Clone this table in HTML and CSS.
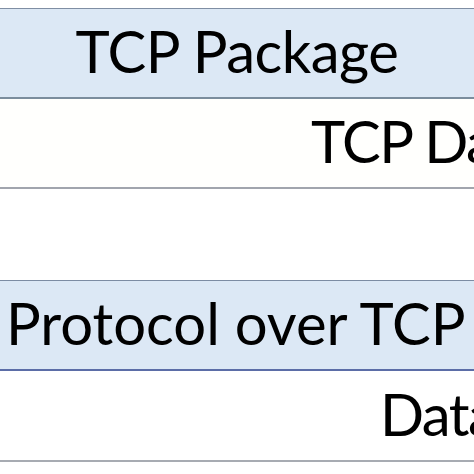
FILE: index.html
```html
<!DOCTYPE html>
<html lang="en">
<head>
<meta charset="utf-8">
<title>TCP Package</title>
<link rel="stylesheet" href="styles.css">
</head>
<body>
<div class="diagram">
  <div class="spacer-top"></div>
  <div class="row band band-top"><span class="label label-center">TCP Package</span></div>
  <div class="row plain plain-tcp"><span class="label label-tight">TCP Data</span></div>
  <div class="gap"></div>
  <div class="row band band-proto"><span class="label">Protocol over TCP Package</span></div>
  <div class="row plain plain-data"><span class="label label-tight">Data</span></div>
</div>
</body>
</html>
```

FILE: styles.css
```css
html, body {
  margin: 0;
  padding: 0;
  background: #ffffff;
}
.diagram {
  width: 474px;
  height: 474px;
  overflow: hidden;
  display: flex;
  flex-direction: column;
  font-family: "Lato", "Liberation Sans", sans-serif;
  color: #000000;
}
.spacer-top { height: 8px; flex: none; }
.gap { height: 91px; flex: none; }
.row {
  flex: none;
  display: flex;
  align-items: center;
  white-space: nowrap;
  overflow: hidden;
}
.label {
  font-size: 58px;
  line-height: 1;
  padding-bottom: 4px;
}
.label-center { letter-spacing: -0.5px; }
.label-tight { letter-spacing: -1.5px; }
.band { background: #dce8f5; }
.band-top {
  height: 88px;
  border-top: 1px solid #7f8ea3;
  border-bottom: 2px solid #7b8d9d;
  justify-content: center;
}
.plain-tcp {
  height: 88px;
  background: #fffffd;
  border-bottom: 2px solid #a1a5ad;
  padding-left: 311px;
}
.band-proto {
  height: 88px;
  border-top: 1px solid #7c8ca3;
  border-bottom: 2px solid #5b6da7;
  padding-left: 6px;
}
.plain-data {
  height: 89px;
  background: #ffffff;
  border-bottom: 2px solid #a7abb2;
  padding-left: 380px;
}
```
